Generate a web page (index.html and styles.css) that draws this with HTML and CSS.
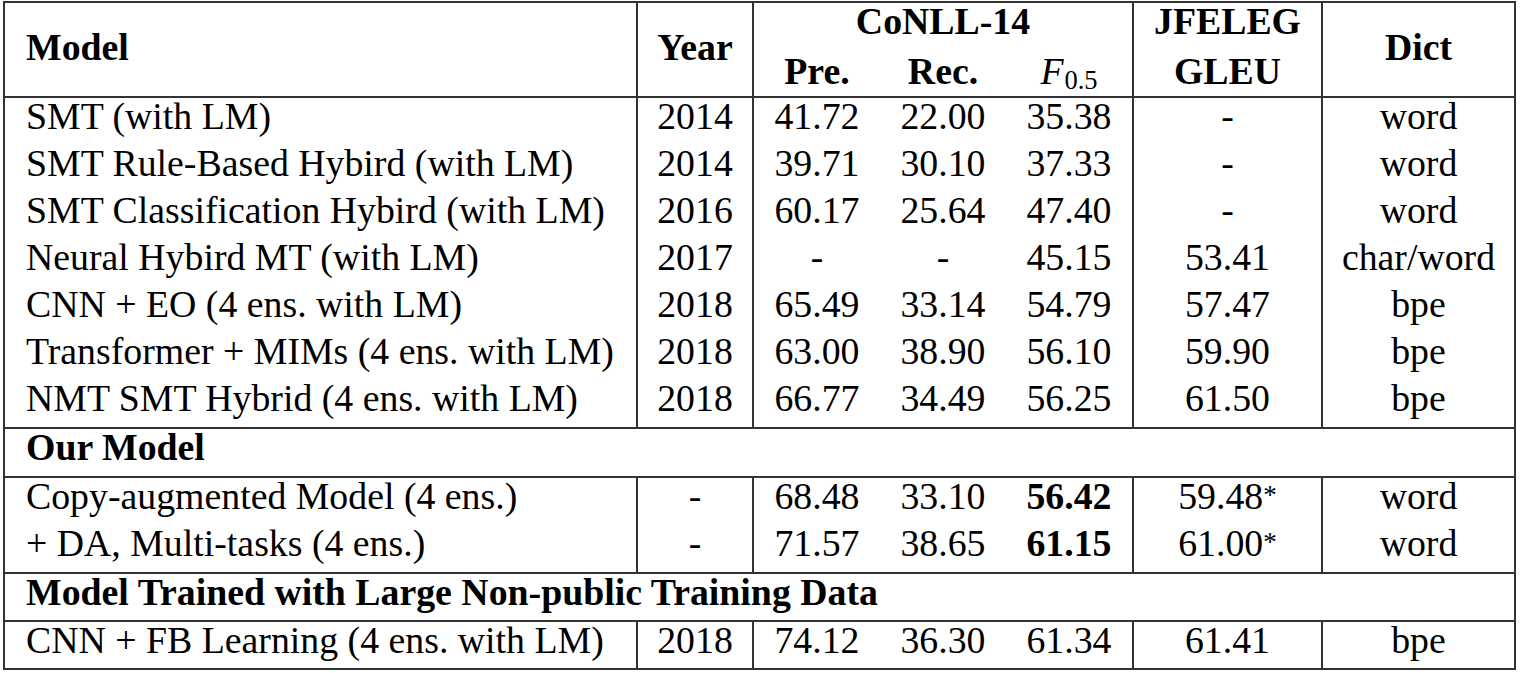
FILE: index.html
```html
<!DOCTYPE html>
<html lang="en">
<head>
<meta charset="utf-8">
<title>Results table</title>
<link rel="stylesheet" href="styles.css">
</head>
<body>
<table class="results">
  <colgroup>
    <col class="c-model">
    <col class="c-year">
    <col class="c-sub">
    <col class="c-sub">
    <col class="c-sub-last">
    <col class="c-jf">
    <col class="c-dict">
  </colgroup>
  <thead>
    <tr class="h1">
      <th rowspan="2" class="left br hb span">Model</th>
      <th rowspan="2" class="br hb span">Year</th>
      <th colspan="3" class="br">CoNLL-14</th>
      <th class="br">JFELEG</th>
      <th rowspan="2" class="br hb span">Dict</th>
    </tr>
    <tr class="h2">
      <th class="hb">Pre.</th>
      <th class="hb">Rec.</th>
      <th class="hb br"><span class="math">F</span><sub class="msub">0.5</sub></th>
      <th class="hb br">GLEU</th>
    </tr>
  </thead>
  <tbody>
    <tr><td class="left br">SMT (with LM)</td><td class="br">2014</td><td>41.72</td><td>22.00</td><td class="br">35.38</td><td class="br">-</td><td class="br">word</td></tr>
    <tr><td class="left br">SMT Rule-Based Hybird (with LM)</td><td class="br">2014</td><td>39.71</td><td>30.10</td><td class="br">37.33</td><td class="br">-</td><td class="br">word</td></tr>
    <tr><td class="left br">SMT Classification Hybird (with LM)</td><td class="br">2016</td><td>60.17</td><td>25.64</td><td class="br">47.40</td><td class="br">-</td><td class="br">word</td></tr>
    <tr><td class="left br">Neural Hybird MT (with LM)</td><td class="br">2017</td><td>-</td><td>-</td><td class="br">45.15</td><td class="br">53.41</td><td class="br">char/word</td></tr>
    <tr><td class="left br">CNN + EO (4 ens. with LM)</td><td class="br">2018</td><td>65.49</td><td>33.14</td><td class="br">54.79</td><td class="br">57.47</td><td class="br">bpe</td></tr>
    <tr><td class="left br">Transformer + MIMs (4 ens. with LM)</td><td class="br">2018</td><td>63.00</td><td>38.90</td><td class="br">56.10</td><td class="br">59.90</td><td class="br">bpe</td></tr>
    <tr class="hl"><td class="left br">NMT SMT Hybrid (4 ens. with LM)</td><td class="br">2018</td><td>66.77</td><td>34.49</td><td class="br">56.25</td><td class="br">61.50</td><td class="br">bpe</td></tr>
    <tr class="hl section"><td colspan="7" class="left br">Our Model</td></tr>
    <tr><td class="left br">Copy-augmented Model (4 ens.)</td><td class="br">-</td><td>68.48</td><td>33.10</td><td class="br best">56.42</td><td class="br">59.48<sup class="star">*</sup></td><td class="br">word</td></tr>
    <tr class="hl"><td class="left br">+ DA, Multi-tasks (4 ens.)</td><td class="br">-</td><td>71.57</td><td>38.65</td><td class="br best">61.15</td><td class="br">61.00<sup class="star">*</sup></td><td class="br">word</td></tr>
    <tr class="hl section short"><td colspan="7" class="left br">Model Trained with Large Non-public Training Data</td></tr>
    <tr class="hl short"><td class="left br">CNN + FB Learning (4 ens. with LM)</td><td class="br">2018</td><td>74.12</td><td>36.30</td><td class="br">61.34</td><td class="br">61.41</td><td class="br">bpe</td></tr>
  </tbody>
</table>
</body>
</html>
```

FILE: styles.css
```css
html, body {
  margin: 0;
  padding: 0;
  background: #ffffff;
}

body {
  font-family: "Liberation Serif", "Times New Roman", serif;
  color: #000000;
}

.results {
  box-sizing: border-box;
  width: 1513px;
  margin: 1px 0 0 3px;
  table-layout: fixed;
  border-collapse: separate;
  border-spacing: 0;
  border-top: 2px solid #333333;
  border-left: 2px solid #333333;
  font-family: "Liberation Serif", "Times New Roman", serif;
  font-size: 37.8px;
}

.c-model { width: 633px; }
.c-year { width: 116px; }
.c-sub { width: 126px; }
.c-sub-last { width: 128px; }
.c-jf { width: 189px; }
.c-dict { width: 193px; }

.results th,
.results td {
  box-sizing: border-box;
  padding: 0 0 10px 0;
  line-height: 37px;
  text-align: center;
  vertical-align: top;
  white-space: nowrap;
  font-weight: normal;
}

.results th {
  font-weight: bold;
}

.results .left {
  text-align: left;
  padding-left: 21px;
}

.results .br {
  border-right: 2px solid #333333;
}

.results .hb {
  border-bottom: 2px solid #333333;
}

.results .span {
  vertical-align: middle;
  padding-bottom: 5px;
  line-height: 41px;
}

.results .h2 th {
  line-height: 43px;
  padding-bottom: 3px;
}

.results .h2 th.span {
  line-height: 41px;
}

.results tr.hl td {
  border-bottom: 2px solid #333333;
}

.results tr.short td {
  padding-bottom: 9px;
}

.results tr.section td {
  font-weight: bold;
}

.results .best {
  font-weight: bold;
}

.math {
  font-style: italic;
  font-weight: normal;
}

.msub {
  font-weight: normal;
  font-size: 26.5px;
  line-height: 0;
  vertical-align: -5px;
  margin-left: 1px;
}

.star {
  font-size: 27px;
  line-height: 0;
  vertical-align: 5px;
}
```
